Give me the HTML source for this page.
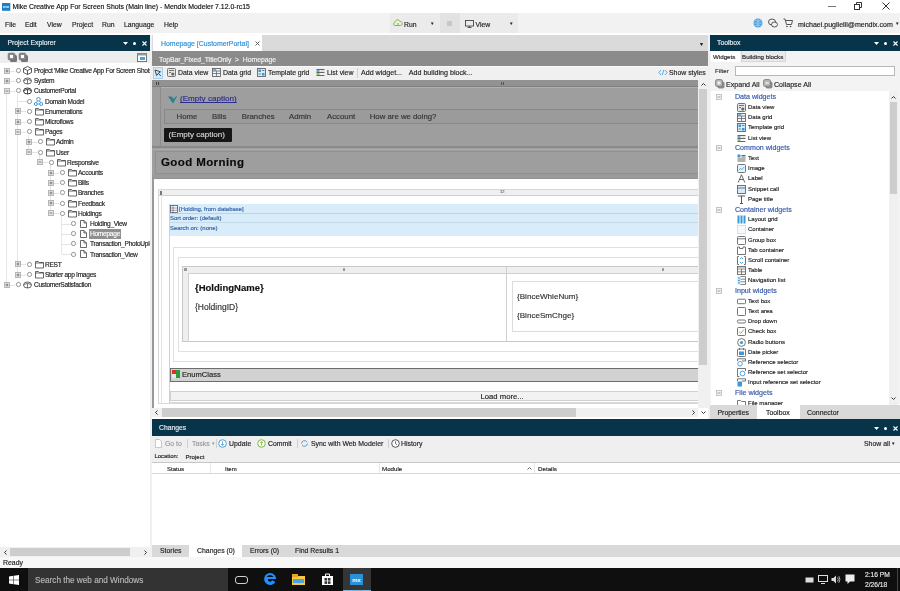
<!DOCTYPE html>
<html><head><meta charset="utf-8">
<style>
*{margin:0;padding:0;box-sizing:border-box}
html,body{width:900px;height:591px;overflow:hidden;background:#fff;font-family:"Liberation Sans",sans-serif;color:#222}
.a{position:absolute}
.t{position:absolute;white-space:nowrap;line-height:1;-webkit-text-stroke:0.15px currentColor}
svg{overflow:visible}
</style></head><body><div style="position:absolute;left:0;top:0;width:900px;height:591px;will-change:transform">
<div class="a" style="left:0px;top:0px;width:900px;height:14px;background:#ffffff;"></div>
<svg class="a" style="left:1.8px;top:2.7px;" width="8.3" height="7.8" viewBox="0 0 8.3 7.8"><rect x="0" y="0" width="8.3" height="7.8" fill="#1a80c8"/><text x="4.15" y="4.9" font-size="4.2" fill="#fff" text-anchor="middle" font-family="Liberation Sans" font-weight="700">mx</text></svg>
<div class="t" style="left:12.5px;top:4.21px;font-size:6.9px;color:#111;font-weight:400;">Mike Creative App For Screen Shots (Main line) - Mendix Modeler 7.12.0-rc15</div>
<div class="a" style="left:828px;top:6px;width:8px;height:1px;background:#777;"></div>
<svg class="a" style="left:854px;top:2px;" width="8" height="8" viewBox="0 0 8 8"><rect x="0.5" y="2.5" width="5" height="5" fill="none" stroke="#333" stroke-width="1"/><path d="M2.5 2.5V0.5H7.5V5.5H5.5" fill="none" stroke="#333" stroke-width="1"/></svg>
<svg class="a" style="left:882px;top:2px;" width="8" height="8" viewBox="0 0 8 8"><path d="M0.5 0.5L7.5 7.5M7.5 0.5L0.5 7.5" stroke="#333" stroke-width="1"/></svg>
<div class="a" style="left:0px;top:13px;width:900px;height:20px;background:#f2f2f2;"></div>
<div class="t" style="left:5px;top:22.35px;font-size:6.8px;color:#222;font-weight:400;">File</div>
<div class="t" style="left:25px;top:22.35px;font-size:6.8px;color:#222;font-weight:400;">Edit</div>
<div class="t" style="left:47px;top:22.35px;font-size:6.8px;color:#222;font-weight:400;">View</div>
<div class="t" style="left:72px;top:22.35px;font-size:6.8px;color:#222;font-weight:400;">Project</div>
<div class="t" style="left:102px;top:22.35px;font-size:6.8px;color:#222;font-weight:400;">Run</div>
<div class="t" style="left:124px;top:22.35px;font-size:6.8px;color:#222;font-weight:400;">Language</div>
<div class="t" style="left:164px;top:22.35px;font-size:6.8px;color:#222;font-weight:400;">Help</div>
<div class="a" style="left:390px;top:13px;width:50px;height:20px;background:#ebebeb;"></div>
<div class="a" style="left:440px;top:13px;width:20px;height:20px;background:#e2e2e2;"></div>
<div class="a" style="left:460px;top:13px;width:58px;height:20px;background:#ebebeb;"></div>
<svg class="a" style="left:393px;top:18px;" width="10" height="9" viewBox="0 0 10 9"><path d="M2 7.5 C0 7.5 0 4.5 2 4.5 C2 1.5 6 1 7 3.5 C9.5 3 10 7.5 7.5 7.5Z" fill="#e8f4dc" stroke="#7cbb3a" stroke-width="1"/><path d="M3.5 5.5h3l-1.5 1.6z" fill="#7cbb3a"/></svg>
<div class="t" style="left:404px;top:22.35px;font-size:6.8px;color:#222;font-weight:400;">Run</div>
<div class="t" style="left:431px;top:21.35px;font-size:5px;color:#222;font-weight:400;">&#9662;</div>
<div class="a" style="left:447px;top:21px;width:5px;height:5px;background:#c8c8c8;"></div>
<svg class="a" style="left:465px;top:19.5px;" width="9" height="8" viewBox="0 0 9 8"><rect x="0.5" y="0.5" width="8" height="5.5" fill="none" stroke="#444" stroke-width="0.9"/><path d="M2.5 7.5h4M4.5 6v1.5" stroke="#444" stroke-width="0.9"/></svg>
<div class="t" style="left:475.5px;top:22.35px;font-size:6.8px;color:#222;font-weight:400;">View</div>
<div class="t" style="left:510px;top:21.35px;font-size:5px;color:#222;font-weight:400;">&#9662;</div>
<svg class="a" style="left:753px;top:18px;" width="10" height="10" viewBox="0 0 10 10"><circle cx="5" cy="5" r="4.5" fill="#4aa3e0"/><path d="M0.5 5h9M5 0.5v9M2 2.2q3 2 6 0M2 7.8q3-2 6 0" stroke="#bfe0f7" stroke-width="0.6" fill="none"/></svg>
<svg class="a" style="left:768px;top:18px;" width="10" height="10" viewBox="0 0 10 10"><ellipse cx="4" cy="4" rx="3.5" ry="3" fill="none" stroke="#444" stroke-width="0.9"/><ellipse cx="6.5" cy="6.5" rx="3" ry="2.5" fill="#f2f2f2" stroke="#444" stroke-width="0.9"/></svg>
<svg class="a" style="left:783px;top:18px;" width="10" height="10" viewBox="0 0 10 10"><path d="M0.5 1h1.5l1.5 5.5h5l1-4h-6.5" fill="none" stroke="#444" stroke-width="0.9"/><circle cx="4" cy="8.5" r="0.8" fill="#444"/><circle cx="7.5" cy="8.5" r="0.8" fill="#444"/></svg>
<div class="t" style="left:798px;top:20.75px;font-size:7.05px;color:#222;font-weight:400;">michael.puglielli@mendix.com</div>
<div class="t" style="left:895.5px;top:21.75px;font-size:4.5px;color:#222;font-weight:400;">&#9662;</div>
<div class="a" style="left:0px;top:35px;width:150px;height:16px;background:#08344a;"></div>
<div class="t" style="left:7.5px;top:40.35px;font-size:6.8px;color:#e8eef2;font-weight:400;">Project Explorer</div>
<svg class="a" style="left:122.5px;top:42px;" width="5" height="3" viewBox="0 0 5 3"><path d="M0 0H5L2.5 3Z" fill="#fff"/></svg>
<svg class="a" style="left:133px;top:41.5px;" width="3" height="3" viewBox="0 0 3 3"><circle cx="1.5" cy="1.5" r="1.5" fill="#fff"/></svg>
<svg class="a" style="left:142px;top:41px;" width="5" height="5" viewBox="0 0 5 5"><path d="M0.5 0.5L4.5 4.5M4.5 0.5L0.5 4.5" stroke="#fff" stroke-width="1.1"/></svg>
<div class="a" style="left:0px;top:51px;width:150px;height:12px;background:#ededed;"></div>
<svg class="a" style="left:8px;top:53px;" width="9" height="9" viewBox="0 0 9 9"><rect x="2" y="2" width="7" height="7" rx="1.5" fill="#777"/><rect x="0" y="0" width="7" height="7" rx="1.5" fill="#8a8a8a" stroke="#666" stroke-width="0.5"/><rect x="2" y="2" width="3" height="3" fill="#fff"/></svg>
<svg class="a" style="left:19px;top:53px;" width="9" height="9" viewBox="0 0 9 9"><rect x="2" y="2" width="7" height="7" rx="1.5" fill="#777"/><rect x="0" y="0" width="7" height="7" rx="1.5" fill="#8a8a8a" stroke="#666" stroke-width="0.5"/><rect x="2" y="2" width="3" height="3" fill="#fff"/></svg>
<svg class="a" style="left:137px;top:53px;" width="10" height="9" viewBox="0 0 10 9"><rect x="0.5" y="0.5" width="9" height="8" fill="#fff" stroke="#777" stroke-width="1"/><rect x="0.5" y="0.5" width="9" height="2" fill="#999"/><rect x="3" y="4" width="5" height="3" fill="#4aa3e0"/></svg>
<div class="a" style="left:0px;top:63px;width:150px;height:497px;background:#ffffff;"></div>
<div class="a" style="left:0px;top:547px;width:150px;height:9px;background:#f0f0f0;"></div>
<div class="a" style="left:10px;top:548px;width:120px;height:8px;background:#cdcdcd;"></div>
<svg class="a" style="left:3.5px;top:549.5px;" width="3" height="5" viewBox="0 0 3 5"><path d="M2.5 0.5L0.5 2.5L2.5 4.5" fill="none" stroke="#333" stroke-width="1"/></svg>
<svg class="a" style="left:143.5px;top:549.5px;" width="3" height="5" viewBox="0 0 3 5"><path d="M0.5 0.5L2.5 2.5L0.5 4.5" fill="none" stroke="#333" stroke-width="1"/></svg>
<div class="a" style="left:0;top:63px;width:150px;height:484px;overflow:hidden">
<div class="a" style="left:6.3px;top:30.9px;width:1px;height:190.79999999999998px;background:#e6e6e6;"></div>
<div class="a" style="left:17.3px;top:30.9px;width:1px;height:180.6px;background:#e6e6e6;"></div>
<div class="a" style="left:28.3px;top:71.69999999999999px;width:1px;height:17.4px;background:#e6e6e6;"></div>
<div class="a" style="left:39.3px;top:92.1px;width:1px;height:7.199999999999999px;background:#e6e6e6;"></div>
<div class="a" style="left:50.3px;top:102.3px;width:1px;height:48.0px;background:#e6e6e6;"></div>
<div class="a" style="left:61.3px;top:153.29999999999998px;width:1px;height:37.8px;background:#e6e6e6;"></div>
<svg class="a" style="left:4px;top:4.5px;" width="6" height="6" viewBox="0 0 6 6"><rect x="0.5" y="0.5" width="5" height="5" fill="#e6e6e6" stroke="#b0b0b0" stroke-width="0.9"/><path d="M1.5 3h3M3 1.5v3" stroke="#666" stroke-width="0.8"/></svg>
<div class="a" style="left:10px;top:7.5px;width:5px;height:1px;background:#e4e4e4;"></div>
<svg class="a" style="left:15.7px;top:5.0px;" width="5" height="5" viewBox="0 0 5 5"><circle cx="2.5" cy="2.5" r="2.1" fill="#fff" stroke="#7a7a7a" stroke-width="0.8"/></svg>
<svg class="a" style="left:23px;top:3.0px;" width="9" height="9" viewBox="0 0 9 9"><path d="M4.5 0.5L8.5 2.5V6.5L4.5 8.5L0.5 6.5V2.5Z M0.5 2.5L4.5 4.5L8.5 2.5 M4.5 4.5V8.5" fill="none" stroke="#333" stroke-width="0.8"/></svg>
<div class="t" style="left:34px;top:4.93px;font-size:6.6px;color:#222;font-weight:400;letter-spacing:-0.28px">Project 'Mike Creative App For Screen Shots</div>
<svg class="a" style="left:4px;top:14.7px;" width="6" height="6" viewBox="0 0 6 6"><rect x="0.5" y="0.5" width="5" height="5" fill="#e6e6e6" stroke="#b0b0b0" stroke-width="0.9"/><path d="M1.5 3h3M3 1.5v3" stroke="#666" stroke-width="0.8"/></svg>
<div class="a" style="left:10px;top:17.7px;width:5px;height:1px;background:#e4e4e4;"></div>
<svg class="a" style="left:15.7px;top:15.2px;" width="5" height="5" viewBox="0 0 5 5"><circle cx="2.5" cy="2.5" r="2.1" fill="#fff" stroke="#7a7a7a" stroke-width="0.8"/></svg>
<svg class="a" style="left:23px;top:13.899999999999999px;" width="9" height="8" viewBox="0 0 9 8"><ellipse cx="4.5" cy="4" rx="4" ry="3" fill="none" stroke="#555" stroke-width="0.9"/><path d="M0.8 3.6L4.5 2.3L8.2 3.6M4.5 2.3V7" fill="none" stroke="#555" stroke-width="0.8"/></svg>
<div class="t" style="left:34px;top:15.13px;font-size:6.6px;color:#222;font-weight:400;letter-spacing:-0.28px">System</div>
<svg class="a" style="left:4px;top:24.9px;" width="6" height="6" viewBox="0 0 6 6"><rect x="0.5" y="0.5" width="5" height="5" fill="#e6e6e6" stroke="#b0b0b0" stroke-width="0.9"/><path d="M1.5 3h3" stroke="#666" stroke-width="0.8"/></svg>
<div class="a" style="left:10px;top:27.9px;width:5px;height:1px;background:#e4e4e4;"></div>
<svg class="a" style="left:15.7px;top:25.4px;" width="5" height="5" viewBox="0 0 5 5"><circle cx="2.5" cy="2.5" r="2.1" fill="#fff" stroke="#7a7a7a" stroke-width="0.8"/></svg>
<svg class="a" style="left:23px;top:24.099999999999998px;" width="9" height="8" viewBox="0 0 9 8"><ellipse cx="4.5" cy="4" rx="4" ry="3" fill="none" stroke="#222" stroke-width="0.9"/><path d="M0.8 3.6L4.5 2.3L8.2 3.6M4.5 2.3V7" fill="none" stroke="#222" stroke-width="0.8"/></svg>
<div class="t" style="left:34px;top:25.33px;font-size:6.6px;color:#222;font-weight:400;letter-spacing:-0.28px">CustomerPortal</div>
<div class="a" style="left:17.5px;top:38.099999999999994px;width:9px;height:1px;background:#e4e4e4;"></div>
<svg class="a" style="left:26.7px;top:35.599999999999994px;" width="5" height="5" viewBox="0 0 5 5"><circle cx="2.5" cy="2.5" r="2.1" fill="#fff" stroke="#7a7a7a" stroke-width="0.8"/></svg>
<svg class="a" style="left:34px;top:33.599999999999994px;" width="9" height="9" viewBox="0 0 9 9"><circle cx="4.5" cy="2.3" r="1.8" fill="none" stroke="#3b9ae1" stroke-width="1"/><circle cx="1.8" cy="7" r="1.5" fill="none" stroke="#3b9ae1" stroke-width="1"/><circle cx="7.2" cy="7" r="1.5" fill="none" stroke="#3b9ae1" stroke-width="1"/><path d="M3.5 4L2.3 5.6M5.5 4L6.7 5.6M3.3 7h2.4" stroke="#3b9ae1" stroke-width="0.9"/></svg>
<div class="t" style="left:45px;top:35.53px;font-size:6.6px;color:#222;font-weight:400;letter-spacing:-0.28px">Domain Model</div>
<svg class="a" style="left:15px;top:45.3px;" width="6" height="6" viewBox="0 0 6 6"><rect x="0.5" y="0.5" width="5" height="5" fill="#e6e6e6" stroke="#b0b0b0" stroke-width="0.9"/><path d="M1.5 3h3M3 1.5v3" stroke="#666" stroke-width="0.8"/></svg>
<div class="a" style="left:21px;top:48.3px;width:5px;height:1px;background:#e4e4e4;"></div>
<svg class="a" style="left:26.7px;top:45.8px;" width="5" height="5" viewBox="0 0 5 5"><circle cx="2.5" cy="2.5" r="2.1" fill="#fff" stroke="#7a7a7a" stroke-width="0.8"/></svg>
<svg class="a" style="left:35px;top:44.8px;" width="9" height="7.5" viewBox="0 0 9 7.5"><path d="M0.5 0.5H3.5L4.5 1.5H8.5V7H0.5Z M0.5 2H8.5" fill="#fff" stroke="#444" stroke-width="0.8"/></svg>
<div class="t" style="left:45px;top:45.73px;font-size:6.6px;color:#222;font-weight:400;letter-spacing:-0.28px">Enumerations</div>
<svg class="a" style="left:15px;top:55.5px;" width="6" height="6" viewBox="0 0 6 6"><rect x="0.5" y="0.5" width="5" height="5" fill="#e6e6e6" stroke="#b0b0b0" stroke-width="0.9"/><path d="M1.5 3h3M3 1.5v3" stroke="#666" stroke-width="0.8"/></svg>
<div class="a" style="left:21px;top:58.5px;width:5px;height:1px;background:#e4e4e4;"></div>
<svg class="a" style="left:26.7px;top:56.0px;" width="5" height="5" viewBox="0 0 5 5"><circle cx="2.5" cy="2.5" r="2.1" fill="#fff" stroke="#7a7a7a" stroke-width="0.8"/></svg>
<svg class="a" style="left:35px;top:55.0px;" width="9" height="7.5" viewBox="0 0 9 7.5"><path d="M0.5 0.5H3.5L4.5 1.5H8.5V7H0.5Z M0.5 2H8.5" fill="#fff" stroke="#444" stroke-width="0.8"/></svg>
<div class="t" style="left:45px;top:55.93px;font-size:6.6px;color:#222;font-weight:400;letter-spacing:-0.28px">Microflows</div>
<svg class="a" style="left:15px;top:65.69999999999999px;" width="6" height="6" viewBox="0 0 6 6"><rect x="0.5" y="0.5" width="5" height="5" fill="#e6e6e6" stroke="#b0b0b0" stroke-width="0.9"/><path d="M1.5 3h3" stroke="#666" stroke-width="0.8"/></svg>
<div class="a" style="left:21px;top:68.69999999999999px;width:5px;height:1px;background:#e4e4e4;"></div>
<svg class="a" style="left:26.7px;top:66.19999999999999px;" width="5" height="5" viewBox="0 0 5 5"><circle cx="2.5" cy="2.5" r="2.1" fill="#fff" stroke="#7a7a7a" stroke-width="0.8"/></svg>
<svg class="a" style="left:35px;top:65.19999999999999px;" width="9" height="7.5" viewBox="0 0 9 7.5"><path d="M0.5 0.5H3.5L4.5 1.5H8.5V7H0.5Z M0.5 2H8.5" fill="#fff" stroke="#444" stroke-width="0.8"/></svg>
<div class="t" style="left:45px;top:66.13px;font-size:6.6px;color:#222;font-weight:400;letter-spacing:-0.28px">Pages</div>
<svg class="a" style="left:26px;top:75.89999999999999px;" width="6" height="6" viewBox="0 0 6 6"><rect x="0.5" y="0.5" width="5" height="5" fill="#e6e6e6" stroke="#b0b0b0" stroke-width="0.9"/><path d="M1.5 3h3M3 1.5v3" stroke="#666" stroke-width="0.8"/></svg>
<div class="a" style="left:32px;top:78.89999999999999px;width:5px;height:1px;background:#e4e4e4;"></div>
<svg class="a" style="left:37.7px;top:76.39999999999999px;" width="5" height="5" viewBox="0 0 5 5"><circle cx="2.5" cy="2.5" r="2.1" fill="#fff" stroke="#7a7a7a" stroke-width="0.8"/></svg>
<svg class="a" style="left:46px;top:75.39999999999999px;" width="9" height="7.5" viewBox="0 0 9 7.5"><path d="M0.5 0.5H3.5L4.5 1.5H8.5V7H0.5Z M0.5 2H8.5" fill="#fff" stroke="#444" stroke-width="0.8"/></svg>
<div class="t" style="left:56px;top:76.33px;font-size:6.6px;color:#222;font-weight:400;letter-spacing:-0.28px">Admin</div>
<svg class="a" style="left:26px;top:86.1px;" width="6" height="6" viewBox="0 0 6 6"><rect x="0.5" y="0.5" width="5" height="5" fill="#e6e6e6" stroke="#b0b0b0" stroke-width="0.9"/><path d="M1.5 3h3" stroke="#666" stroke-width="0.8"/></svg>
<div class="a" style="left:32px;top:89.1px;width:5px;height:1px;background:#e4e4e4;"></div>
<svg class="a" style="left:37.7px;top:86.6px;" width="5" height="5" viewBox="0 0 5 5"><circle cx="2.5" cy="2.5" r="2.1" fill="#fff" stroke="#7a7a7a" stroke-width="0.8"/></svg>
<svg class="a" style="left:46px;top:85.6px;" width="9" height="7.5" viewBox="0 0 9 7.5"><path d="M0.5 0.5H3.5L4.5 1.5H8.5V7H0.5Z M0.5 2H8.5" fill="#fff" stroke="#444" stroke-width="0.8"/></svg>
<div class="t" style="left:56px;top:86.53px;font-size:6.6px;color:#222;font-weight:400;letter-spacing:-0.28px">User</div>
<svg class="a" style="left:37px;top:96.3px;" width="6" height="6" viewBox="0 0 6 6"><rect x="0.5" y="0.5" width="5" height="5" fill="#e6e6e6" stroke="#b0b0b0" stroke-width="0.9"/><path d="M1.5 3h3" stroke="#666" stroke-width="0.8"/></svg>
<div class="a" style="left:43px;top:99.3px;width:5px;height:1px;background:#e4e4e4;"></div>
<svg class="a" style="left:48.7px;top:96.8px;" width="5" height="5" viewBox="0 0 5 5"><circle cx="2.5" cy="2.5" r="2.1" fill="#fff" stroke="#7a7a7a" stroke-width="0.8"/></svg>
<svg class="a" style="left:57px;top:95.8px;" width="9" height="7.5" viewBox="0 0 9 7.5"><path d="M0.5 0.5H3.5L4.5 1.5H8.5V7H0.5Z M0.5 2H8.5" fill="#fff" stroke="#444" stroke-width="0.8"/></svg>
<div class="t" style="left:67px;top:96.73px;font-size:6.6px;color:#222;font-weight:400;letter-spacing:-0.28px">Responsive</div>
<svg class="a" style="left:48px;top:106.5px;" width="6" height="6" viewBox="0 0 6 6"><rect x="0.5" y="0.5" width="5" height="5" fill="#e6e6e6" stroke="#b0b0b0" stroke-width="0.9"/><path d="M1.5 3h3M3 1.5v3" stroke="#666" stroke-width="0.8"/></svg>
<div class="a" style="left:54px;top:109.5px;width:5px;height:1px;background:#e4e4e4;"></div>
<svg class="a" style="left:59.7px;top:107.0px;" width="5" height="5" viewBox="0 0 5 5"><circle cx="2.5" cy="2.5" r="2.1" fill="#fff" stroke="#7a7a7a" stroke-width="0.8"/></svg>
<svg class="a" style="left:68px;top:106.0px;" width="9" height="7.5" viewBox="0 0 9 7.5"><path d="M0.5 0.5H3.5L4.5 1.5H8.5V7H0.5Z M0.5 2H8.5" fill="#fff" stroke="#444" stroke-width="0.8"/></svg>
<div class="t" style="left:78px;top:106.93px;font-size:6.6px;color:#222;font-weight:400;letter-spacing:-0.28px">Accounts</div>
<svg class="a" style="left:48px;top:116.69999999999999px;" width="6" height="6" viewBox="0 0 6 6"><rect x="0.5" y="0.5" width="5" height="5" fill="#e6e6e6" stroke="#b0b0b0" stroke-width="0.9"/><path d="M1.5 3h3M3 1.5v3" stroke="#666" stroke-width="0.8"/></svg>
<div class="a" style="left:54px;top:119.69999999999999px;width:5px;height:1px;background:#e4e4e4;"></div>
<svg class="a" style="left:59.7px;top:117.19999999999999px;" width="5" height="5" viewBox="0 0 5 5"><circle cx="2.5" cy="2.5" r="2.1" fill="#fff" stroke="#7a7a7a" stroke-width="0.8"/></svg>
<svg class="a" style="left:68px;top:116.19999999999999px;" width="9" height="7.5" viewBox="0 0 9 7.5"><path d="M0.5 0.5H3.5L4.5 1.5H8.5V7H0.5Z M0.5 2H8.5" fill="#fff" stroke="#444" stroke-width="0.8"/></svg>
<div class="t" style="left:78px;top:117.13px;font-size:6.6px;color:#222;font-weight:400;letter-spacing:-0.28px">Bills</div>
<svg class="a" style="left:48px;top:126.89999999999998px;" width="6" height="6" viewBox="0 0 6 6"><rect x="0.5" y="0.5" width="5" height="5" fill="#e6e6e6" stroke="#b0b0b0" stroke-width="0.9"/><path d="M1.5 3h3M3 1.5v3" stroke="#666" stroke-width="0.8"/></svg>
<div class="a" style="left:54px;top:129.89999999999998px;width:5px;height:1px;background:#e4e4e4;"></div>
<svg class="a" style="left:59.7px;top:127.39999999999998px;" width="5" height="5" viewBox="0 0 5 5"><circle cx="2.5" cy="2.5" r="2.1" fill="#fff" stroke="#7a7a7a" stroke-width="0.8"/></svg>
<svg class="a" style="left:68px;top:126.39999999999998px;" width="9" height="7.5" viewBox="0 0 9 7.5"><path d="M0.5 0.5H3.5L4.5 1.5H8.5V7H0.5Z M0.5 2H8.5" fill="#fff" stroke="#444" stroke-width="0.8"/></svg>
<div class="t" style="left:78px;top:127.33px;font-size:6.6px;color:#222;font-weight:400;letter-spacing:-0.28px">Branches</div>
<svg class="a" style="left:48px;top:137.1px;" width="6" height="6" viewBox="0 0 6 6"><rect x="0.5" y="0.5" width="5" height="5" fill="#e6e6e6" stroke="#b0b0b0" stroke-width="0.9"/><path d="M1.5 3h3M3 1.5v3" stroke="#666" stroke-width="0.8"/></svg>
<div class="a" style="left:54px;top:140.1px;width:5px;height:1px;background:#e4e4e4;"></div>
<svg class="a" style="left:59.7px;top:137.6px;" width="5" height="5" viewBox="0 0 5 5"><circle cx="2.5" cy="2.5" r="2.1" fill="#fff" stroke="#7a7a7a" stroke-width="0.8"/></svg>
<svg class="a" style="left:68px;top:136.6px;" width="9" height="7.5" viewBox="0 0 9 7.5"><path d="M0.5 0.5H3.5L4.5 1.5H8.5V7H0.5Z M0.5 2H8.5" fill="#fff" stroke="#444" stroke-width="0.8"/></svg>
<div class="t" style="left:78px;top:137.53px;font-size:6.6px;color:#222;font-weight:400;letter-spacing:-0.28px">Feedback</div>
<svg class="a" style="left:48px;top:147.29999999999998px;" width="6" height="6" viewBox="0 0 6 6"><rect x="0.5" y="0.5" width="5" height="5" fill="#e6e6e6" stroke="#b0b0b0" stroke-width="0.9"/><path d="M1.5 3h3" stroke="#666" stroke-width="0.8"/></svg>
<div class="a" style="left:54px;top:150.29999999999998px;width:5px;height:1px;background:#e4e4e4;"></div>
<svg class="a" style="left:59.7px;top:147.79999999999998px;" width="5" height="5" viewBox="0 0 5 5"><circle cx="2.5" cy="2.5" r="2.1" fill="#fff" stroke="#7a7a7a" stroke-width="0.8"/></svg>
<svg class="a" style="left:68px;top:146.79999999999998px;" width="9" height="7.5" viewBox="0 0 9 7.5"><path d="M0.5 0.5H3.5L4.5 1.5H8.5V7H0.5Z M0.5 2H8.5" fill="#fff" stroke="#444" stroke-width="0.8"/></svg>
<div class="t" style="left:78px;top:147.73px;font-size:6.6px;color:#222;font-weight:400;letter-spacing:-0.28px">Holdings</div>
<div class="a" style="left:61.5px;top:160.5px;width:9px;height:1px;background:#e4e4e4;"></div>
<svg class="a" style="left:70.7px;top:158.0px;" width="5" height="5" viewBox="0 0 5 5"><circle cx="2.5" cy="2.5" r="2.1" fill="#fff" stroke="#7a7a7a" stroke-width="0.8"/></svg>
<svg class="a" style="left:80px;top:156.7px;" width="7" height="8" viewBox="0 0 7 8"><path d="M0.5 0.5H4L6.5 3V7.5H0.5Z M4 0.5V3H6.5" fill="#fff" stroke="#444" stroke-width="0.8"/></svg>
<div class="t" style="left:90px;top:157.93px;font-size:6.6px;color:#222;font-weight:400;letter-spacing:-0.28px">Holding_View</div>
<div class="a" style="left:61.5px;top:170.7px;width:9px;height:1px;background:#e4e4e4;"></div>
<svg class="a" style="left:70.7px;top:168.2px;" width="5" height="5" viewBox="0 0 5 5"><circle cx="2.5" cy="2.5" r="2.1" fill="#fff" stroke="#7a7a7a" stroke-width="0.8"/></svg>
<svg class="a" style="left:80px;top:166.89999999999998px;" width="7" height="8" viewBox="0 0 7 8"><path d="M0.5 0.5H4L6.5 3V7.5H0.5Z M4 0.5V3H6.5" fill="#fff" stroke="#444" stroke-width="0.8"/></svg>
<div class="a" style="left:89px;top:166.2px;width:32px;height:9.5px;background:#8f8f8f;"></div>
<div class="t" style="left:90px;top:168.13px;font-size:6.6px;color:#fff;font-weight:400;letter-spacing:-0.28px">Homepage</div>
<div class="a" style="left:61.5px;top:180.89999999999998px;width:9px;height:1px;background:#e4e4e4;"></div>
<svg class="a" style="left:70.7px;top:178.39999999999998px;" width="5" height="5" viewBox="0 0 5 5"><circle cx="2.5" cy="2.5" r="2.1" fill="#fff" stroke="#7a7a7a" stroke-width="0.8"/></svg>
<svg class="a" style="left:80px;top:177.09999999999997px;" width="7" height="8" viewBox="0 0 7 8"><path d="M0.5 0.5H4L6.5 3V7.5H0.5Z M4 0.5V3H6.5" fill="#fff" stroke="#444" stroke-width="0.8"/></svg>
<div class="t" style="left:90px;top:178.33px;font-size:6.6px;color:#222;font-weight:400;letter-spacing:-0.28px">Transaction_PhotoUpload</div>
<div class="a" style="left:61.5px;top:191.1px;width:9px;height:1px;background:#e4e4e4;"></div>
<svg class="a" style="left:70.7px;top:188.6px;" width="5" height="5" viewBox="0 0 5 5"><circle cx="2.5" cy="2.5" r="2.1" fill="#fff" stroke="#7a7a7a" stroke-width="0.8"/></svg>
<svg class="a" style="left:80px;top:187.29999999999998px;" width="7" height="8" viewBox="0 0 7 8"><path d="M0.5 0.5H4L6.5 3V7.5H0.5Z M4 0.5V3H6.5" fill="#fff" stroke="#444" stroke-width="0.8"/></svg>
<div class="t" style="left:90px;top:188.53px;font-size:6.6px;color:#222;font-weight:400;letter-spacing:-0.28px">Transaction_View</div>
<svg class="a" style="left:15px;top:198.29999999999998px;" width="6" height="6" viewBox="0 0 6 6"><rect x="0.5" y="0.5" width="5" height="5" fill="#e6e6e6" stroke="#b0b0b0" stroke-width="0.9"/><path d="M1.5 3h3M3 1.5v3" stroke="#666" stroke-width="0.8"/></svg>
<div class="a" style="left:21px;top:201.29999999999998px;width:5px;height:1px;background:#e4e4e4;"></div>
<svg class="a" style="left:26.7px;top:198.79999999999998px;" width="5" height="5" viewBox="0 0 5 5"><circle cx="2.5" cy="2.5" r="2.1" fill="#fff" stroke="#7a7a7a" stroke-width="0.8"/></svg>
<svg class="a" style="left:35px;top:197.79999999999998px;" width="9" height="7.5" viewBox="0 0 9 7.5"><path d="M0.5 0.5H3.5L4.5 1.5H8.5V7H0.5Z M0.5 2H8.5" fill="#fff" stroke="#444" stroke-width="0.8"/></svg>
<div class="t" style="left:45px;top:198.73px;font-size:6.6px;color:#222;font-weight:400;letter-spacing:-0.28px">REST</div>
<svg class="a" style="left:15px;top:208.5px;" width="6" height="6" viewBox="0 0 6 6"><rect x="0.5" y="0.5" width="5" height="5" fill="#e6e6e6" stroke="#b0b0b0" stroke-width="0.9"/><path d="M1.5 3h3M3 1.5v3" stroke="#666" stroke-width="0.8"/></svg>
<div class="a" style="left:21px;top:211.5px;width:5px;height:1px;background:#e4e4e4;"></div>
<svg class="a" style="left:26.7px;top:209.0px;" width="5" height="5" viewBox="0 0 5 5"><circle cx="2.5" cy="2.5" r="2.1" fill="#fff" stroke="#7a7a7a" stroke-width="0.8"/></svg>
<svg class="a" style="left:35px;top:208.0px;" width="9" height="7.5" viewBox="0 0 9 7.5"><path d="M0.5 0.5H3.5L4.5 1.5H8.5V7H0.5Z M0.5 2H8.5" fill="#fff" stroke="#444" stroke-width="0.8"/></svg>
<div class="t" style="left:45px;top:208.93px;font-size:6.6px;color:#222;font-weight:400;letter-spacing:-0.28px">Starter app Images</div>
<svg class="a" style="left:4px;top:218.7px;" width="6" height="6" viewBox="0 0 6 6"><rect x="0.5" y="0.5" width="5" height="5" fill="#e6e6e6" stroke="#b0b0b0" stroke-width="0.9"/><path d="M1.5 3h3M3 1.5v3" stroke="#666" stroke-width="0.8"/></svg>
<div class="a" style="left:10px;top:221.7px;width:5px;height:1px;background:#e4e4e4;"></div>
<svg class="a" style="left:15.7px;top:219.2px;" width="5" height="5" viewBox="0 0 5 5"><circle cx="2.5" cy="2.5" r="2.1" fill="#fff" stroke="#7a7a7a" stroke-width="0.8"/></svg>
<svg class="a" style="left:23px;top:217.89999999999998px;" width="9" height="8" viewBox="0 0 9 8"><ellipse cx="4.5" cy="4" rx="4" ry="3" fill="none" stroke="#555" stroke-width="0.9"/><path d="M0.8 3.6L4.5 2.3L8.2 3.6M4.5 2.3V7" fill="none" stroke="#555" stroke-width="0.8"/></svg>
<div class="t" style="left:34px;top:219.13px;font-size:6.6px;color:#222;font-weight:400;letter-spacing:-0.28px">CustomerSatisfaction</div>
</div>
<div class="a" style="left:150px;top:35px;width:2px;height:525px;background:#f0f0f0;"></div>
<div class="a" style="left:152px;top:35px;width:558px;height:16px;background:#dadada;"></div>
<div class="a" style="left:153px;top:35px;width:109px;height:17px;background:#ffffff;"></div>
<div class="t" style="left:161px;top:40.79px;font-size:6.95px;color:#2b8fd6;font-weight:400;">Homepage [CustomerPortal]</div>
<svg class="a" style="left:255px;top:41px;" width="5" height="5" viewBox="0 0 5 5"><path d="M0.5 0.5L4.5 4.5M4.5 0.5L0.5 4.5" stroke="#555" stroke-width="0.9"/></svg>
<div class="t" style="left:700px;top:41.16px;font-size:6px;color:#222;font-weight:400;">&#9662;</div>
<div class="a" style="left:152px;top:51.3px;width:556px;height:14.7px;background:#8b8b8b;"></div>
<div class="t" style="left:159px;top:56.85px;font-size:6.8px;color:#f2f2f2;font-weight:400;">TopBar_Fixed_TitleOnly&nbsp;&nbsp;&gt;&nbsp;&nbsp;Homepage</div>
<div class="a" style="left:152px;top:66px;width:556px;height:14px;background:#f0f0f0;"></div>
<div class="a" style="left:152px;top:66px;width:556px;height:1.2px;background:#fafafa;"></div>
<div class="a" style="left:152.5px;top:66.5px;width:10px;height:12px;background:#d5eaf8;border:1px solid #a8d0ee"></div>
<svg class="a" style="left:154px;top:68.5px;" width="8" height="8" viewBox="0 0 8 8"><path d="M1 1L6.5 2.8L4.3 4.3L6.8 7M1 1L2.6 6.5L4.3 4.3" fill="none" stroke="#333" stroke-width="0.9"/></svg>
<svg class="a" style="left:167px;top:68px;" width="9" height="9" viewBox="0 0 9 9"><rect x="0.5" y="0.5" width="8" height="8" rx="1" fill="#e6e6e6" stroke="#666" stroke-width="0.9"/><path d="M2 2.5h5M2 4.5h2" stroke="#666" stroke-width="0.9"/><circle cx="5.8" cy="6" r="1.6" fill="#666"/></svg>
<div class="t" style="left:178px;top:70.21px;font-size:6.9px;color:#222;font-weight:400;">Data view</div>
<svg class="a" style="left:212px;top:68px;" width="9" height="9" viewBox="0 0 9 9"><rect x="0.5" y="0.5" width="8" height="8" fill="#f3f3f3" stroke="#666" stroke-width="0.9"/><path d="M0.5 3h8M0.5 5.5h8M4.5 3v5.5" stroke="#666" stroke-width="0.8"/><rect x="1.2" y="1.2" width="3" height="1.4" fill="#3a9ad9"/></svg>
<div class="t" style="left:223px;top:70.21px;font-size:6.9px;color:#222;font-weight:400;">Data grid</div>
<svg class="a" style="left:257px;top:68px;" width="9" height="9" viewBox="0 0 9 9"><rect x="0.5" y="0.5" width="8" height="8" fill="#d6ecf9" stroke="#666" stroke-width="0.9"/><rect x="1.5" y="1.5" width="2.5" height="2.5" fill="#3a9ad9"/><rect x="5" y="5" width="2.5" height="2.5" fill="#3a9ad9"/><path d="M5 2.5h2.5M1.5 6h2.5" stroke="#666" stroke-width="0.8"/></svg>
<div class="t" style="left:268px;top:70.21px;font-size:6.9px;color:#222;font-weight:400;">Template grid</div>
<svg class="a" style="left:316px;top:68px;" width="9" height="9" viewBox="0 0 9 9"><path d="M0.5 1.5h8M0.5 4.5h8M0.5 7.5h8" stroke="#666" stroke-width="1"/><rect x="0.5" y="2.2" width="3" height="1.6" fill="#3a9ad9"/><rect x="0.5" y="5.2" width="3" height="1.6" fill="#7cbb3a"/><rect x="4.5" y="2.2" width="4" height="1.6" fill="#ddd"/></svg>
<div class="t" style="left:327px;top:70.21px;font-size:6.9px;color:#222;font-weight:400;">List view</div>
<div class="a" style="left:357px;top:68px;width:1px;height:10px;background:#d0d0d0;"></div>
<div class="t" style="left:361px;top:70.13px;font-size:7.1px;color:#222;font-weight:400;">Add widget...</div>
<div class="t" style="left:408.7px;top:70.11px;font-size:7.15px;color:#222;font-weight:400;">Add building block...</div>
<svg class="a" style="left:658px;top:69px;" width="10" height="7" viewBox="0 0 10 7"><path d="M3 1L0.8 3.5L3 6M7 1L9.2 3.5L7 6M5.8 0.8L4.2 6.2" fill="none" stroke="#4aa3e0" stroke-width="0.9"/></svg>
<div class="t" style="left:669px;top:70.21px;font-size:6.9px;color:#222;font-weight:400;">Show styles</div>
<div class="a" style="left:152px;top:80px;width:546px;height:328px;overflow:hidden;background:#fff">
<div class="a" style="left:0px;top:0px;width:547px;height:99px;background:#9e9e9e;"></div>
<div class="a" style="left:0px;top:0px;width:547px;height:6px;background:#929292;"></div>
<div class="a" style="left:0px;top:6px;width:547px;height:1px;background:#808080;"></div>
<div class="a" style="left:4px;top:1.5px;width:1px;height:3.5px;background:#444;"></div>
<div class="a" style="left:5.5px;top:1.5px;width:1px;height:3.5px;background:#444;"></div>
<div class="a" style="left:349px;top:1.5px;width:1px;height:3.5px;background:#555;"></div>
<div class="a" style="left:350.5px;top:1.5px;width:1px;height:3.5px;background:#555;"></div>
<div class="a" style="left:7.5px;top:6px;width:1px;height:60px;background:#8c8c8c;"></div>
<div class="a" style="left:8.5px;top:7px;width:540px;height:1px;background:#b0b0b0;"></div>
<svg class="a" style="left:16px;top:15px;" width="10" height="9" viewBox="0 0 10 9"><path d="M0 1.5L4 1.5L5 4L9.5 0.5L5 8.5Z" fill="#2a8088"/></svg>
<div class="t" style="left:28px;top:15.34px;font-size:8.1px;color:#2c2c8c;font-weight:400;"><u>(Empty caption)</u></div>
<div class="a" style="left:12px;top:29px;width:540px;height:15px;background:#9b9b9b;border:1px solid #888;border-right:none"></div>
<div class="t" style="left:24.5px;top:33.46px;font-size:7.8px;color:#333;font-weight:400;">Home</div>
<div class="t" style="left:60px;top:33.46px;font-size:7.8px;color:#333;font-weight:400;">Bills</div>
<div class="t" style="left:89.69999999999999px;top:33.46px;font-size:7.8px;color:#333;font-weight:400;">Branches</div>
<div class="t" style="left:137px;top:33.46px;font-size:7.8px;color:#333;font-weight:400;">Admin</div>
<div class="t" style="left:175px;top:33.46px;font-size:7.8px;color:#333;font-weight:400;">Account</div>
<div class="t" style="left:217.7px;top:33.46px;font-size:7.8px;color:#333;font-weight:400;">How are we doing?</div>
<div class="a" style="left:12px;top:47.5px;width:68px;height:14px;background:#161616;border-radius:1px"></div>
<div class="t" style="left:16.599999999999994px;top:51.36px;font-size:8.05px;color:#d4d4d4;font-weight:400;">(Empty caption)</div>
<div class="a" style="left:0px;top:65.5px;width:547px;height:1px;background:#888;"></div>
<div class="a" style="left:0px;top:67px;width:547px;height:1px;background:#8c8c8c;"></div>
<div class="a" style="left:0px;top:69px;width:547px;height:1px;background:#acacac;"></div>
<div class="a" style="left:3px;top:70.5px;width:545px;height:23px;background:#9e9e9e;border:1px solid #909090;border-right:none"></div>
<div class="a" style="left:0px;top:93.5px;width:547px;height:5px;background:#9a9a9a;"></div>
<div class="t" style="left:9px;top:77.11px;font-size:11.5px;color:#0a0a0a;font-weight:700;letter-spacing:0.4px">Good Morning</div>
<div class="a" style="left:0px;top:97.5px;width:547px;height:1px;background:#939393;"></div>
<div class="a" style="left:0px;top:99px;width:2px;height:229px;background:#9a9a9a;"></div>
<div class="a" style="left:5.5px;top:109px;width:542px;height:215px;background:#fff;border:1px solid #d8d8d8;border-right:none"></div>
<div class="a" style="left:6.5px;top:110px;width:541px;height:5px;background:#efefef;"></div>
<div class="a" style="left:6.5px;top:115px;width:541px;height:1px;background:#d0d0d0;"></div>
<div class="a" style="left:8px;top:110.5px;width:1.5px;height:4px;background:#777;"></div>
<div class="t" style="left:348px;top:110.44px;font-size:4px;color:#666;font-weight:400;">12</div>
<div class="a" style="left:8.5px;top:115px;width:1px;height:209px;background:#e4e4e4;"></div>
<div class="a" style="left:16.5px;top:124px;width:531px;height:199px;background:#fff;border-left:1px solid #d0d0d0;border-bottom:1px solid #d8d8d8"></div>
<div class="a" style="left:17.5px;top:124px;width:530px;height:9px;background:#d9ecfa;"></div>
<div class="a" style="left:17.5px;top:133px;width:530px;height:1px;background:#bcd3e4;"></div>
<div class="a" style="left:17.5px;top:134px;width:530px;height:8px;background:#d9ecfa;"></div>
<div class="a" style="left:17.5px;top:142px;width:530px;height:1px;background:#c5dbea;"></div>
<div class="a" style="left:17.5px;top:143px;width:530px;height:13px;background:#d9ecfa;"></div>
<svg class="a" style="left:18px;top:125px;" width="8" height="8" viewBox="0 0 8 8"><rect x="0.5" y="0.5" width="7" height="7" fill="#fff" stroke="#556" stroke-width="0.8"/><path d="M0.5 3h7M0.5 5.3h7M3 0.5v7" stroke="#556" stroke-width="0.6"/></svg>
<div class="t" style="left:27px;top:126.88px;font-size:5.95px;color:#3461a6;font-weight:400;">[Holding, from database]</div>
<div class="t" style="left:18px;top:136.18px;font-size:5.95px;color:#3461a6;font-weight:400;">Sort order: (default)</div>
<div class="t" style="left:18px;top:145.98px;font-size:5.95px;color:#3461a6;font-weight:400;">Search on: (none)</div>
<div class="a" style="left:20.5px;top:166.5px;width:527px;height:115px;background:#fff;border:1px solid #e0e0e0;border-right:none"></div>
<div class="a" style="left:25.5px;top:176.5px;width:522px;height:95px;background:#fff;border:1px solid #e0e0e0;border-right:none"></div>
<div class="a" style="left:30px;top:186px;width:517px;height:76px;background:#fff;border:1px solid #c8c8c8;border-right:none"></div>
<div class="a" style="left:31px;top:187px;width:516px;height:5.5px;background:#efefef;"></div>
<div class="a" style="left:31px;top:192.5px;width:516px;height:1px;background:#cfcfcf;"></div>
<div class="a" style="left:31px;top:187px;width:5px;height:74px;background:#efefef;"></div>
<div class="a" style="left:36px;top:192.5px;width:1px;height:69px;background:#d0d0d0;"></div>
<div class="a" style="left:32px;top:188px;width:3px;height:3px;background:#999;"></div>
<div class="t" style="left:191px;top:187.94px;font-size:4px;color:#666;font-weight:400;">6</div>
<div class="t" style="left:510px;top:187.94px;font-size:4px;color:#666;font-weight:400;">6</div>
<div class="a" style="left:353.5px;top:187px;width:1px;height:75px;background:#d0d0d0;"></div>
<div class="t" style="left:43px;top:203.09px;font-size:9.5px;color:#111;font-weight:700;">{HoldingName}</div>
<div class="t" style="left:43px;top:223.19px;font-size:8.5px;color:#333;font-weight:400;">{HoldingID}</div>
<div class="a" style="left:359.5px;top:201px;width:188px;height:51px;background:#fff;border:1px solid #dcdcdc;border-right:none"></div>
<div class="t" style="left:365px;top:213.34px;font-size:8.1px;color:#333;font-weight:400;">{BlnceWhleNum}</div>
<div class="t" style="left:365px;top:232.34px;font-size:8.1px;color:#333;font-weight:400;">{BlnceSmChge}</div>
<div class="a" style="left:17.5px;top:288px;width:530px;height:14px;background:#d2d2d2;border:1px solid #6e6e6e;border-right:none"></div>
<svg class="a" style="left:20px;top:290px;" width="9" height="8" viewBox="0 0 9 8"><rect x="0" y="0" width="4" height="4" fill="#e0301e"/><rect x="4" y="0" width="4" height="8" fill="#2e9a3e"/><rect x="0" y="4" width="4" height="4" fill="#e8e8e8"/></svg>
<div class="t" style="left:30px;top:291.04px;font-size:7.6px;color:#222;font-weight:400;">EnumClass</div>
<div class="a" style="left:17.5px;top:310.5px;width:530px;height:10.5px;background:#f2f2f2;border:1px solid #d0d0d0;border-right:none"></div>
<div class="t" style="left:328.5px;top:312.80px;font-size:7.7px;color:#222;font-weight:400;">Load more...</div>
</div>
<div class="a" style="left:698px;top:80px;width:10px;height:328px;background:#f0f0f0;"></div>
<div class="a" style="left:699px;top:89px;width:8px;height:276px;background:#cdcdcd;"></div>
<svg class="a" style="left:700.5px;top:83.0px;" width="5" height="3" viewBox="0 0 5 3"><path d="M0.5 2.5L2.5 0.5L4.5 2.5" fill="none" stroke="#333" stroke-width="1"/></svg>
<svg class="a" style="left:700.5px;top:411.0px;" width="5" height="3" viewBox="0 0 5 3"><path d="M0.5 0.5L2.5 2.5L4.5 0.5" fill="none" stroke="#333" stroke-width="1"/></svg>
<div class="a" style="left:152px;top:408px;width:546px;height:9px;background:#f0f0f0;"></div>
<div class="a" style="left:162px;top:408.2px;width:414px;height:8.4px;background:#cdcdcd;"></div>
<svg class="a" style="left:155.0px;top:410.0px;" width="3" height="5" viewBox="0 0 3 5"><path d="M2.5 0.5L0.5 2.5L2.5 4.5" fill="none" stroke="#333" stroke-width="1"/></svg>
<svg class="a" style="left:691.5px;top:410.0px;" width="3" height="5" viewBox="0 0 3 5"><path d="M0.5 0.5L2.5 2.5L0.5 4.5" fill="none" stroke="#333" stroke-width="1"/></svg>
<div class="a" style="left:708px;top:35px;width:2px;height:385px;background:#f0f0f0;"></div>
<div class="a" style="left:710px;top:35px;width:190px;height:16px;background:#08344a;"></div>
<div class="t" style="left:717px;top:40.35px;font-size:6.8px;color:#e8eef2;font-weight:400;">Toolbox</div>
<svg class="a" style="left:873.5px;top:42px;" width="5" height="3" viewBox="0 0 5 3"><path d="M0 0H5L2.5 3Z" fill="#fff"/></svg>
<svg class="a" style="left:884px;top:41.5px;" width="3" height="3" viewBox="0 0 3 3"><circle cx="1.5" cy="1.5" r="1.5" fill="#fff"/></svg>
<svg class="a" style="left:892.5px;top:41px;" width="5" height="5" viewBox="0 0 5 5"><path d="M0.5 0.5L4.5 4.5M4.5 0.5L0.5 4.5" stroke="#fff" stroke-width="1.1"/></svg>
<div class="a" style="left:710px;top:51px;width:190px;height:353px;background:#f3f3f3;"></div>
<div class="a" style="left:711px;top:51px;width:29px;height:11px;background:#ffffff;"></div>
<div class="a" style="left:740.5px;top:50.5px;width:45px;height:11px;background:#e9e9e9;border:1px solid #d6d6d6;border-top:none"></div>
<div class="t" style="left:713px;top:53.78px;font-size:6.2px;color:#222;font-weight:400;">Widgets</div>
<div class="t" style="left:742px;top:54.28px;font-size:6.2px;color:#222;font-weight:400;">Building blocks</div>
<div class="t" style="left:715px;top:67.98px;font-size:6.2px;color:#333;font-weight:400;">Filter</div>
<div class="a" style="left:735px;top:66px;width:160px;height:10px;background:#fff;border:1px solid #b8b8b8"></div>
<svg class="a" style="left:715px;top:79px;" width="10" height="10" viewBox="0 0 10 10"><rect x="2.5" y="2.5" width="7" height="7" rx="1.8" fill="#8a8a8a"/><rect x="0.5" y="0.5" width="7" height="7" rx="1.8" fill="#b5b5b5" stroke="#777" stroke-width="0.8"/><path d="M2.2 4h3.6M4 2.2v3.6" stroke="#fff" stroke-width="1"/></svg>
<div class="t" style="left:726px;top:82.23px;font-size:7.1px;color:#222;font-weight:400;">Expand All</div>
<svg class="a" style="left:763px;top:79px;" width="10" height="10" viewBox="0 0 10 10"><rect x="2.5" y="2.5" width="7" height="7" rx="1.8" fill="#8a8a8a"/><rect x="0.5" y="0.5" width="7" height="7" rx="1.8" fill="#b5b5b5" stroke="#777" stroke-width="0.8"/><path d="M2.2 4h3.6" stroke="#fff" stroke-width="1"/></svg>
<div class="t" style="left:774px;top:82.23px;font-size:7.1px;color:#222;font-weight:400;">Collapse All</div>
<div class="a" style="left:711px;top:91px;width:178px;height:314px;background:#ffffff;"></div>
<div class="a" style="left:711px;top:91px;width:178px;height:314px;overflow:hidden">
<svg class="a" style="left:5px;top:3.400000000000003px;" width="6" height="6" viewBox="0 0 6 6"><rect x="0.5" y="0.5" width="5" height="5" fill="#f4f4f4" stroke="#b8b8b8" stroke-width="0.8"/><path d="M1.5 3h3" stroke="#888" stroke-width="0.8"/></svg>
<div class="t" style="left:24px;top:3.43px;font-size:7.1px;color:#3457a6;font-weight:400;">Data widgets</div>
<svg class="a" style="left:26px;top:11.900000000000002px;" width="9" height="9" viewBox="0 0 9 9"><rect x="0.5" y="0.5" width="8" height="8" rx="1" fill="#e6e6e6" stroke="#666" stroke-width="0.9"/><path d="M2 2.5h5M2 4.5h2" stroke="#666" stroke-width="0.9"/><circle cx="5.8" cy="6" r="1.6" fill="#666"/></svg>
<div class="t" style="left:37px;top:12.96px;font-size:6.0px;color:#222;font-weight:400;">Data view</div>
<svg class="a" style="left:26px;top:22.1px;" width="9" height="9" viewBox="0 0 9 9"><rect x="0.5" y="0.5" width="8" height="8" fill="#f3f3f3" stroke="#666" stroke-width="0.9"/><path d="M0.5 3h8M0.5 5.5h8M4.5 3v5.5" stroke="#666" stroke-width="0.8"/><rect x="1.2" y="1.2" width="3" height="1.4" fill="#3a9ad9"/></svg>
<div class="t" style="left:37px;top:23.16px;font-size:6.0px;color:#222;font-weight:400;">Data grid</div>
<svg class="a" style="left:26px;top:32.3px;" width="9" height="9" viewBox="0 0 9 9"><rect x="0.5" y="0.5" width="8" height="8" fill="#d6ecf9" stroke="#666" stroke-width="0.9"/><rect x="1.5" y="1.5" width="2.5" height="2.5" fill="#3a9ad9"/><rect x="5" y="5" width="2.5" height="2.5" fill="#3a9ad9"/><path d="M5 2.5h2.5M1.5 6h2.5" stroke="#666" stroke-width="0.8"/></svg>
<div class="t" style="left:37px;top:33.36px;font-size:6.0px;color:#222;font-weight:400;">Template grid</div>
<svg class="a" style="left:26px;top:42.5px;" width="9" height="9" viewBox="0 0 9 9"><path d="M0.5 1.5h8M0.5 4.5h8M0.5 7.5h8" stroke="#666" stroke-width="1"/><rect x="0.5" y="2.2" width="3" height="1.6" fill="#3a9ad9"/><rect x="0.5" y="5.2" width="3" height="1.6" fill="#7cbb3a"/><rect x="4.5" y="2.2" width="4" height="1.6" fill="#ddd"/></svg>
<div class="t" style="left:37px;top:43.56px;font-size:6.0px;color:#222;font-weight:400;">List view</div>
<svg class="a" style="left:5px;top:54.400000000000006px;" width="6" height="6" viewBox="0 0 6 6"><rect x="0.5" y="0.5" width="5" height="5" fill="#f4f4f4" stroke="#b8b8b8" stroke-width="0.8"/><path d="M1.5 3h3" stroke="#888" stroke-width="0.8"/></svg>
<div class="t" style="left:24px;top:54.43px;font-size:7.1px;color:#3457a6;font-weight:400;">Common widgets</div>
<svg class="a" style="left:26px;top:62.900000000000006px;" width="9" height="9" viewBox="0 0 9 9"><rect x="0.5" y="0.5" width="3" height="3" fill="#3a9ad9"/><path d="M4.5 1.5h4M0.5 5h8M0.5 7h8M4.5 3h4" stroke="#666" stroke-width="1"/></svg>
<div class="t" style="left:37px;top:63.96px;font-size:6.0px;color:#222;font-weight:400;">Text</div>
<svg class="a" style="left:26px;top:73.10000000000001px;" width="9" height="9" viewBox="0 0 9 9"><rect x="0.5" y="0.5" width="8" height="8" rx="1" fill="#e3f3fb" stroke="#666" stroke-width="0.9"/><path d="M1.8 6.2L3.5 4.5L5 5.5L7.2 3" fill="none" stroke="#3a9ad9" stroke-width="0.8"/></svg>
<div class="t" style="left:37px;top:74.16px;font-size:6.0px;color:#222;font-weight:400;">Image</div>
<svg class="a" style="left:26px;top:83.30000000000001px;" width="9" height="9" viewBox="0 0 9 9"><path d="M1.2 8.5L4.5 0.8L7.8 8.5M2.5 5.5h4" fill="none" stroke="#555" stroke-width="0.9"/></svg>
<div class="t" style="left:37px;top:84.36px;font-size:6.0px;color:#222;font-weight:400;">Label</div>
<svg class="a" style="left:26px;top:93.50000000000001px;" width="9" height="9" viewBox="0 0 9 9"><rect x="0.5" y="0.5" width="8" height="8" fill="#d6ecf9" stroke="#666" stroke-width="0.9"/><path d="M0.5 3h8" stroke="#666" stroke-width="0.9"/></svg>
<div class="t" style="left:37px;top:94.56px;font-size:6.0px;color:#222;font-weight:400;">Snippet call</div>
<svg class="a" style="left:26px;top:103.70000000000002px;" width="9" height="9" viewBox="0 0 9 9"><path d="M0.8 1h7.4M4.5 1v7.5M3 8.5h3" stroke="#555" stroke-width="1"/></svg>
<div class="t" style="left:37px;top:104.76px;font-size:6.0px;color:#222;font-weight:400;">Page title</div>
<svg class="a" style="left:5px;top:115.60000000000002px;" width="6" height="6" viewBox="0 0 6 6"><rect x="0.5" y="0.5" width="5" height="5" fill="#f4f4f4" stroke="#b8b8b8" stroke-width="0.8"/><path d="M1.5 3h3" stroke="#888" stroke-width="0.8"/></svg>
<div class="t" style="left:24px;top:115.63px;font-size:7.1px;color:#3457a6;font-weight:400;">Container widgets</div>
<svg class="a" style="left:26px;top:124.10000000000002px;" width="9" height="9" viewBox="0 0 9 9"><rect x="0.5" y="0.5" width="2" height="8" fill="#3a9ad9"/><rect x="3.5" y="0.5" width="2" height="8" fill="#3a9ad9"/><rect x="6.5" y="0.5" width="2" height="8" fill="#3a9ad9"/></svg>
<div class="t" style="left:37px;top:125.16px;font-size:6.0px;color:#222;font-weight:400;">Layout grid</div>
<svg class="a" style="left:26px;top:134.3px;" width="9" height="9" viewBox="0 0 9 9"><rect x="0.5" y="0.5" width="8" height="8" fill="#f4fbff" stroke="#bfe3f7" stroke-width="0.9"/></svg>
<div class="t" style="left:37px;top:135.36px;font-size:6.0px;color:#222;font-weight:400;">Container</div>
<svg class="a" style="left:26px;top:144.5px;" width="9" height="9" viewBox="0 0 9 9"><rect x="0.5" y="0.5" width="8" height="8" rx="1" fill="#fff" stroke="#666" stroke-width="0.9"/><path d="M0.5 2.8h8" stroke="#666" stroke-width="0.9"/></svg>
<div class="t" style="left:37px;top:145.56px;font-size:6.0px;color:#222;font-weight:400;">Group box</div>
<svg class="a" style="left:26px;top:154.7px;" width="9" height="9" viewBox="0 0 9 9"><path d="M0.5 1V8.5H8.5V1H6M0.5 1H2.5V2.5H6V1" fill="none" stroke="#666" stroke-width="0.9"/></svg>
<div class="t" style="left:37px;top:155.76px;font-size:6.0px;color:#222;font-weight:400;">Tab container</div>
<svg class="a" style="left:26px;top:164.89999999999998px;" width="9" height="9" viewBox="0 0 9 9"><path d="M2 0.5H0.5V8.5H2M7 0.5H8.5V8.5H7" fill="none" stroke="#666" stroke-width="0.9"/><path d="M3 3L4.5 1.5L6 3M3 6L4.5 7.5L6 6" fill="none" stroke="#3a9ad9" stroke-width="0.9"/></svg>
<div class="t" style="left:37px;top:165.96px;font-size:6.0px;color:#222;font-weight:400;">Scroll container</div>
<svg class="a" style="left:26px;top:175.09999999999997px;" width="9" height="9" viewBox="0 0 9 9"><rect x="0.5" y="0.5" width="8" height="8" fill="#fff" stroke="#666" stroke-width="0.9"/><path d="M0.5 3h8M0.5 5.8h8M4.5 3v5.5" stroke="#666" stroke-width="0.8"/><rect x="1" y="1" width="7" height="1.6" fill="#ccc"/></svg>
<div class="t" style="left:37px;top:176.16px;font-size:6.0px;color:#222;font-weight:400;">Table</div>
<svg class="a" style="left:26px;top:185.29999999999995px;" width="9" height="9" viewBox="0 0 9 9"><rect x="0.5" y="0.5" width="3" height="8" fill="#bfe3f7"/><path d="M3.5 0.5h5v8h-5M3.5 3.2h5M3.5 5.8h5" fill="none" stroke="#666" stroke-width="0.8"/><path d="M1 2h2M1 4.5h2M1 7h2" stroke="#3a9ad9" stroke-width="0.9"/></svg>
<div class="t" style="left:37px;top:186.36px;font-size:6.0px;color:#222;font-weight:400;">Navigation list</div>
<svg class="a" style="left:5px;top:197.19999999999993px;" width="6" height="6" viewBox="0 0 6 6"><rect x="0.5" y="0.5" width="5" height="5" fill="#f4f4f4" stroke="#b8b8b8" stroke-width="0.8"/><path d="M1.5 3h3" stroke="#888" stroke-width="0.8"/></svg>
<div class="t" style="left:24px;top:197.23px;font-size:7.1px;color:#3457a6;font-weight:400;">Input widgets</div>
<svg class="a" style="left:26px;top:205.69999999999993px;" width="9" height="9" viewBox="0 0 9 9"><rect x="0.5" y="2.2" width="8" height="4.5" rx="0.8" fill="#fff" stroke="#666" stroke-width="0.9"/></svg>
<div class="t" style="left:37px;top:206.76px;font-size:6.0px;color:#222;font-weight:400;">Text box</div>
<svg class="a" style="left:26px;top:215.89999999999992px;" width="9" height="9" viewBox="0 0 9 9"><rect x="0.5" y="0.5" width="8" height="8" rx="0.8" fill="#fff" stroke="#666" stroke-width="0.9"/></svg>
<div class="t" style="left:37px;top:216.96px;font-size:6.0px;color:#222;font-weight:400;">Text area</div>
<svg class="a" style="left:26px;top:226.0999999999999px;" width="9" height="9" viewBox="0 0 9 9"><rect x="0.5" y="3" width="8" height="3" rx="1.2" fill="#fff" stroke="#666" stroke-width="0.9"/></svg>
<div class="t" style="left:37px;top:227.16px;font-size:6.0px;color:#222;font-weight:400;">Drop down</div>
<svg class="a" style="left:26px;top:236.2999999999999px;" width="9" height="9" viewBox="0 0 9 9"><rect x="0.5" y="0.5" width="8" height="8" rx="1" fill="#fff" stroke="#666" stroke-width="0.9"/><path d="M2 4.6L3.8 6.3L7 2.5" fill="none" stroke="#7cbb3a" stroke-width="0.9"/></svg>
<div class="t" style="left:37px;top:237.36px;font-size:6.0px;color:#222;font-weight:400;">Check box</div>
<svg class="a" style="left:26px;top:246.4999999999999px;" width="9" height="9" viewBox="0 0 9 9"><circle cx="4.5" cy="4.5" r="3.9" fill="#fff" stroke="#666" stroke-width="0.9"/><circle cx="4.5" cy="4.5" r="1.6" fill="#3a9ad9"/></svg>
<div class="t" style="left:37px;top:247.56px;font-size:6.0px;color:#222;font-weight:400;">Radio buttons</div>
<svg class="a" style="left:26px;top:256.6999999999999px;" width="9" height="9" viewBox="0 0 9 9"><rect x="0.5" y="1" width="8" height="7.5" rx="1" fill="#fff" stroke="#666" stroke-width="0.9"/><rect x="2" y="3.5" width="5" height="3.5" fill="#3a9ad9"/><path d="M2.5 0v2M6.5 0v2" stroke="#666" stroke-width="0.9"/></svg>
<div class="t" style="left:37px;top:257.76px;font-size:6.0px;color:#222;font-weight:400;">Date picker</div>
<svg class="a" style="left:26px;top:266.89999999999986px;" width="9" height="9" viewBox="0 0 9 9"><path d="M0.5 3V0.8H8.5V3H5" fill="none" stroke="#666" stroke-width="0.9"/><circle cx="3" cy="5.8" r="2.3" fill="#fff" stroke="#3a9ad9" stroke-width="0.9"/></svg>
<div class="t" style="left:37px;top:267.96px;font-size:6.0px;color:#222;font-weight:400;">Reference selector</div>
<svg class="a" style="left:26px;top:277.09999999999985px;" width="9" height="9" viewBox="0 0 9 9"><path d="M2.5 8.5H0.5V0.5H8.5V3" fill="none" stroke="#666" stroke-width="0.9"/><circle cx="5.5" cy="5.5" r="2.4" fill="#fff" stroke="#3a9ad9" stroke-width="0.9"/></svg>
<div class="t" style="left:37px;top:278.16px;font-size:6.0px;color:#222;font-weight:400;">Reference set selector</div>
<svg class="a" style="left:26px;top:287.29999999999984px;" width="9" height="9" viewBox="0 0 9 9"><path d="M0.5 3V0.8H8.5V3H5" fill="none" stroke="#666" stroke-width="0.9"/><rect x="0.5" y="3.5" width="4.5" height="5" fill="#3a9ad9"/></svg>
<div class="t" style="left:37px;top:288.36px;font-size:6.0px;color:#222;font-weight:400;">Input reference set selector</div>
<svg class="a" style="left:5px;top:299.1999999999998px;" width="6" height="6" viewBox="0 0 6 6"><rect x="0.5" y="0.5" width="5" height="5" fill="#f4f4f4" stroke="#b8b8b8" stroke-width="0.8"/><path d="M1.5 3h3" stroke="#888" stroke-width="0.8"/></svg>
<div class="t" style="left:24px;top:299.23px;font-size:7.1px;color:#3457a6;font-weight:400;">File widgets</div>
<svg class="a" style="left:26px;top:307.6999999999998px;" width="9" height="9" viewBox="0 0 9 9"><path d="M0.5 1.5H3.5L4.5 2.5H8.5V8H0.5Z" fill="#fff" stroke="#666" stroke-width="0.9"/></svg>
<div class="t" style="left:37px;top:308.76px;font-size:6.0px;color:#222;font-weight:400;">File manager</div>
<svg class="a" style="left:26px;top:317.8999999999998px;" width="9" height="9" viewBox="0 0 9 9"><rect x="0.5" y="0.5" width="8" height="8" fill="#fff" stroke="#666" stroke-width="0.9"/></svg>
<div class="t" style="left:37px;top:318.96px;font-size:6.0px;color:#222;font-weight:400;">Image uploader</div>
</div>
<div class="a" style="left:889px;top:91px;width:9px;height:314px;background:#f0f0f0;"></div>
<div class="a" style="left:890px;top:102px;width:7px;height:92px;background:#cdcdcd;"></div>
<svg class="a" style="left:891.0px;top:95.5px;" width="5" height="3" viewBox="0 0 5 3"><path d="M0.5 2.5L2.5 0.5L4.5 2.5" fill="none" stroke="#333" stroke-width="1"/></svg>
<svg class="a" style="left:891.0px;top:397.0px;" width="5" height="3" viewBox="0 0 5 3"><path d="M0.5 0.5L2.5 2.5L4.5 0.5" fill="none" stroke="#333" stroke-width="1"/></svg>
<div class="a" style="left:710px;top:405px;width:190px;height:15px;background:#d9d9d9;"></div>
<div class="a" style="left:757px;top:405px;width:43px;height:14.2px;background:#ffffff;"></div>
<div class="t" style="left:717.5px;top:409.61px;font-size:6.9px;color:#222;font-weight:400;">Properties</div>
<div class="t" style="left:766px;top:409.61px;font-size:6.9px;color:#222;font-weight:400;">Toolbox</div>
<div class="t" style="left:807px;top:409.61px;font-size:6.9px;color:#222;font-weight:400;">Connector</div>
<div class="a" style="left:152px;top:419.2px;width:748px;height:16.8px;background:#08344a;"></div>
<div class="t" style="left:159px;top:424.85px;font-size:6.8px;color:#e8eef2;font-weight:400;">Changes</div>
<svg class="a" style="left:873.5px;top:427px;" width="5" height="3" viewBox="0 0 5 3"><path d="M0 0H5L2.5 3Z" fill="#fff"/></svg>
<svg class="a" style="left:884px;top:426.5px;" width="3" height="3" viewBox="0 0 3 3"><circle cx="1.5" cy="1.5" r="1.5" fill="#fff"/></svg>
<svg class="a" style="left:892.5px;top:426px;" width="5" height="5" viewBox="0 0 5 5"><path d="M0.5 0.5L4.5 4.5M4.5 0.5L0.5 4.5" stroke="#fff" stroke-width="1.1"/></svg>
<div class="a" style="left:152px;top:436px;width:748px;height:27px;background:#efefef;"></div>
<svg class="a" style="left:155px;top:439px;" width="7" height="9" viewBox="0 0 7 9"><path d="M0.5 0.5H4.5L6.5 2.5V8.5H0.5Z" fill="#fff" stroke="#bbb" stroke-width="0.8"/></svg>
<div class="t" style="left:165px;top:440.81px;font-size:6.9px;color:#999;font-weight:400;">Go to</div>
<div class="a" style="left:187px;top:439px;width:1px;height:9px;background:#d0d0d0;"></div>
<div class="t" style="left:192px;top:440.81px;font-size:6.9px;color:#999;font-weight:400;">Tasks</div>
<div class="t" style="left:211.5px;top:441.75px;font-size:4.5px;color:#999;font-weight:400;">&#9662;</div>
<div class="a" style="left:216px;top:439px;width:1px;height:9px;background:#d0d0d0;"></div>
<svg class="a" style="left:218px;top:439px;" width="9" height="9" viewBox="0 0 9 9"><circle cx="4.5" cy="4.5" r="3.8" fill="#fff" stroke="#4aa3e0" stroke-width="1"/><path d="M4.5 2.3v4M3 5l1.5 1.5L6 5" fill="none" stroke="#4aa3e0" stroke-width="0.8"/></svg>
<div class="t" style="left:229px;top:440.81px;font-size:6.9px;color:#222;font-weight:400;">Update</div>
<svg class="a" style="left:257px;top:439px;" width="9" height="9" viewBox="0 0 9 9"><circle cx="4.5" cy="4.5" r="3.8" fill="#fff" stroke="#7cbb3a" stroke-width="1"/><path d="M4.5 6.7v-4M3 4l1.5-1.5L6 4" fill="none" stroke="#7cbb3a" stroke-width="0.8"/></svg>
<div class="t" style="left:268px;top:440.81px;font-size:6.9px;color:#222;font-weight:400;">Commit</div>
<div class="a" style="left:297px;top:439px;width:1px;height:9px;background:#d0d0d0;"></div>
<svg class="a" style="left:300px;top:439px;" width="9" height="9" viewBox="0 0 9 9"><path d="M1.5 4.5A3 3 0 0 1 7 3M7.5 4.5A3 3 0 0 1 2 6" fill="none" stroke="#4aa3e0" stroke-width="1"/></svg>
<div class="t" style="left:311px;top:440.81px;font-size:6.9px;color:#222;font-weight:400;">Sync with Web Modeler</div>
<div class="a" style="left:388px;top:439px;width:1px;height:9px;background:#d0d0d0;"></div>
<svg class="a" style="left:391px;top:439px;" width="9" height="9" viewBox="0 0 9 9"><circle cx="4.5" cy="4.5" r="3.8" fill="#fff" stroke="#444" stroke-width="0.9"/><path d="M4.5 2.3v2.2l1.5 1.2" fill="none" stroke="#444" stroke-width="0.8"/></svg>
<div class="t" style="left:401px;top:440.81px;font-size:6.9px;color:#222;font-weight:400;">History</div>
<div class="t" style="left:864px;top:440.81px;font-size:6.9px;color:#222;font-weight:400;">Show all</div>
<div class="t" style="left:892px;top:442.25px;font-size:4.5px;color:#222;font-weight:400;">&#9662;</div>
<div class="t" style="left:154.5px;top:454.00px;font-size:5.9px;color:#222;font-weight:400;">Location:</div>
<div class="t" style="left:185.5px;top:453.62px;font-size:6.1px;color:#222;font-weight:400;">Project</div>
<div class="a" style="left:152px;top:462px;width:748px;height:12px;background:#ffffff;border-top:1px solid #c8c8c8;border-bottom:1px solid #d8d8d8"></div>
<div class="t" style="left:167px;top:465.66px;font-size:6.0px;color:#222;font-weight:400;">Status</div>
<div class="a" style="left:210px;top:463px;width:1px;height:10px;background:#e8e8e8;"></div>
<div class="t" style="left:225px;top:465.66px;font-size:6.0px;color:#222;font-weight:400;">Item</div>
<div class="a" style="left:379px;top:463px;width:1px;height:10px;background:#e8e8e8;"></div>
<div class="t" style="left:382px;top:465.58px;font-size:6.2px;color:#222;font-weight:400;">Module</div>
<svg class="a" style="left:526.5px;top:466.5px;" width="5" height="3" viewBox="0 0 5 3"><path d="M0.5 2.5L2.5 0.5L4.5 2.5" fill="none" stroke="#666" stroke-width="1"/></svg>
<div class="a" style="left:534px;top:463px;width:1px;height:10px;background:#e8e8e8;"></div>
<div class="t" style="left:538px;top:465.58px;font-size:6.2px;color:#222;font-weight:400;">Details</div>
<div class="a" style="left:152px;top:474px;width:748px;height:70px;background:#ffffff;"></div>
<div class="a" style="left:152px;top:544.5px;width:748px;height:12.5px;background:#d9d9d9;"></div>
<div class="a" style="left:189px;top:544.5px;width:53px;height:12.5px;background:#ffffff;"></div>
<div class="t" style="left:160px;top:548.31px;font-size:6.9px;color:#222;font-weight:400;">Stories</div>
<div class="t" style="left:197px;top:548.31px;font-size:6.9px;color:#222;font-weight:400;">Changes (0)</div>
<div class="t" style="left:250px;top:548.31px;font-size:6.9px;color:#222;font-weight:400;">Errors (0)</div>
<div class="t" style="left:295px;top:548.31px;font-size:6.9px;color:#222;font-weight:400;">Find Results 1</div>
<div class="a" style="left:0px;top:557px;width:900px;height:11px;background:#f7f7f7;"></div>
<div class="a" style="left:0px;top:556px;width:150px;height:1px;background:#f0f0f0;"></div>
<div class="t" style="left:3px;top:560.31px;font-size:6.9px;color:#222;font-weight:400;">Ready</div>
<div class="a" style="left:0px;top:568px;width:900px;height:23px;background:#0f0f0f;"></div>
<svg class="a" style="left:9px;top:575px;" width="10" height="10" viewBox="0 0 10 10"><path d="M0 1.4L4.3 0.8V4.7H0Z M4.8 0.7L10 0V4.7H4.8Z M0 5.2H4.3V9.2L0 8.6Z M4.8 5.2H10V10L4.8 9.3Z" fill="#fff"/></svg>
<div class="a" style="left:28px;top:568px;width:200px;height:23px;background:#333333;"></div>
<div class="t" style="left:35px;top:576.80px;font-size:8.2px;color:#b8b8b8;font-weight:400;">Search the web and Windows</div>
<svg class="a" style="left:235px;top:575.5px;" width="13" height="8" viewBox="0 0 13 8"><rect x="0.5" y="0.5" width="12" height="7" rx="2.5" fill="none" stroke="#cfcfcf" stroke-width="1"/></svg>
<svg class="a" style="left:264px;top:573px;" width="12" height="12" viewBox="0 0 12 12"><path d="M10.5 8.5A5 5 0 1 1 11 5H3.2A3 3 0 0 0 9 7.8" fill="none" stroke="#1e90ff" stroke-width="2"/></svg>
<svg class="a" style="left:292px;top:574px;" width="13" height="11" viewBox="0 0 13 11"><rect x="0" y="2" width="13" height="9" fill="#f4c843"/><rect x="0" y="0" width="6" height="3" fill="#e0a820"/><rect x="1" y="5" width="11" height="4" fill="#4aa3e0"/></svg>
<svg class="a" style="left:322px;top:573px;" width="11" height="12" viewBox="0 0 11 12"><path d="M0 3H11V12H0Z" fill="#fff"/><path d="M3.5 3V1H7.5V3" fill="none" stroke="#fff" stroke-width="1"/><rect x="2.5" y="5" width="2.6" height="2.6" fill="#333"/><rect x="5.9" y="5" width="2.6" height="2.6" fill="#333"/><rect x="2.5" y="8.3" width="2.6" height="2.6" fill="#333"/><rect x="5.9" y="8.3" width="2.6" height="2.6" fill="#333"/></svg>
<div class="a" style="left:343px;top:568px;width:28px;height:23px;background:#353535;"></div>
<div class="a" style="left:343px;top:589.5px;width:28px;height:1.5px;background:#7ab8e8;"></div>
<svg class="a" style="left:350px;top:574px;" width="13" height="11" viewBox="0 0 13 11"><rect x="0" y="0" width="13" height="11" fill="#2a90d8"/><text x="6.5" y="7.5" font-size="6" fill="#fff" text-anchor="middle" font-family="Liberation Sans" font-weight="700">mx</text></svg>
<svg class="a" style="left:805px;top:576px;" width="9" height="7" viewBox="0 0 9 7"><rect x="0.5" y="1.5" width="8" height="5" fill="#ddd"/></svg>
<svg class="a" style="left:818px;top:575px;" width="10" height="9" viewBox="0 0 10 9"><rect x="0.5" y="0.5" width="9" height="6" fill="none" stroke="#ddd" stroke-width="1"/><path d="M3 8.5h4" stroke="#ddd"/></svg>
<svg class="a" style="left:831px;top:575px;" width="10" height="9" viewBox="0 0 10 9"><path d="M0.5 3H2.5L5 0.5V8.5L2.5 6H0.5Z" fill="#ddd"/><path d="M6.5 2.5Q8 4.5 6.5 6.5M7.8 1.2Q10 4.5 7.8 7.8" fill="none" stroke="#ddd" stroke-width="0.8"/></svg>
<svg class="a" style="left:845px;top:574px;" width="10" height="11" viewBox="0 0 10 11"><path d="M0.5 0.5H9.5V7.5H5L2.5 10V7.5H0.5Z" fill="#eee"/></svg>
<div class="t" style="left:865px;top:572.39px;font-size:6.7px;color:#e6e6e6;font-weight:400;">2:16 PM</div>
<div class="t" style="left:865px;top:582.09px;font-size:6.7px;color:#e6e6e6;font-weight:400;">2/26/18</div>
<div class="a" style="left:897px;top:568px;width:1px;height:23px;background:#444;"></div>
</div></body></html>
